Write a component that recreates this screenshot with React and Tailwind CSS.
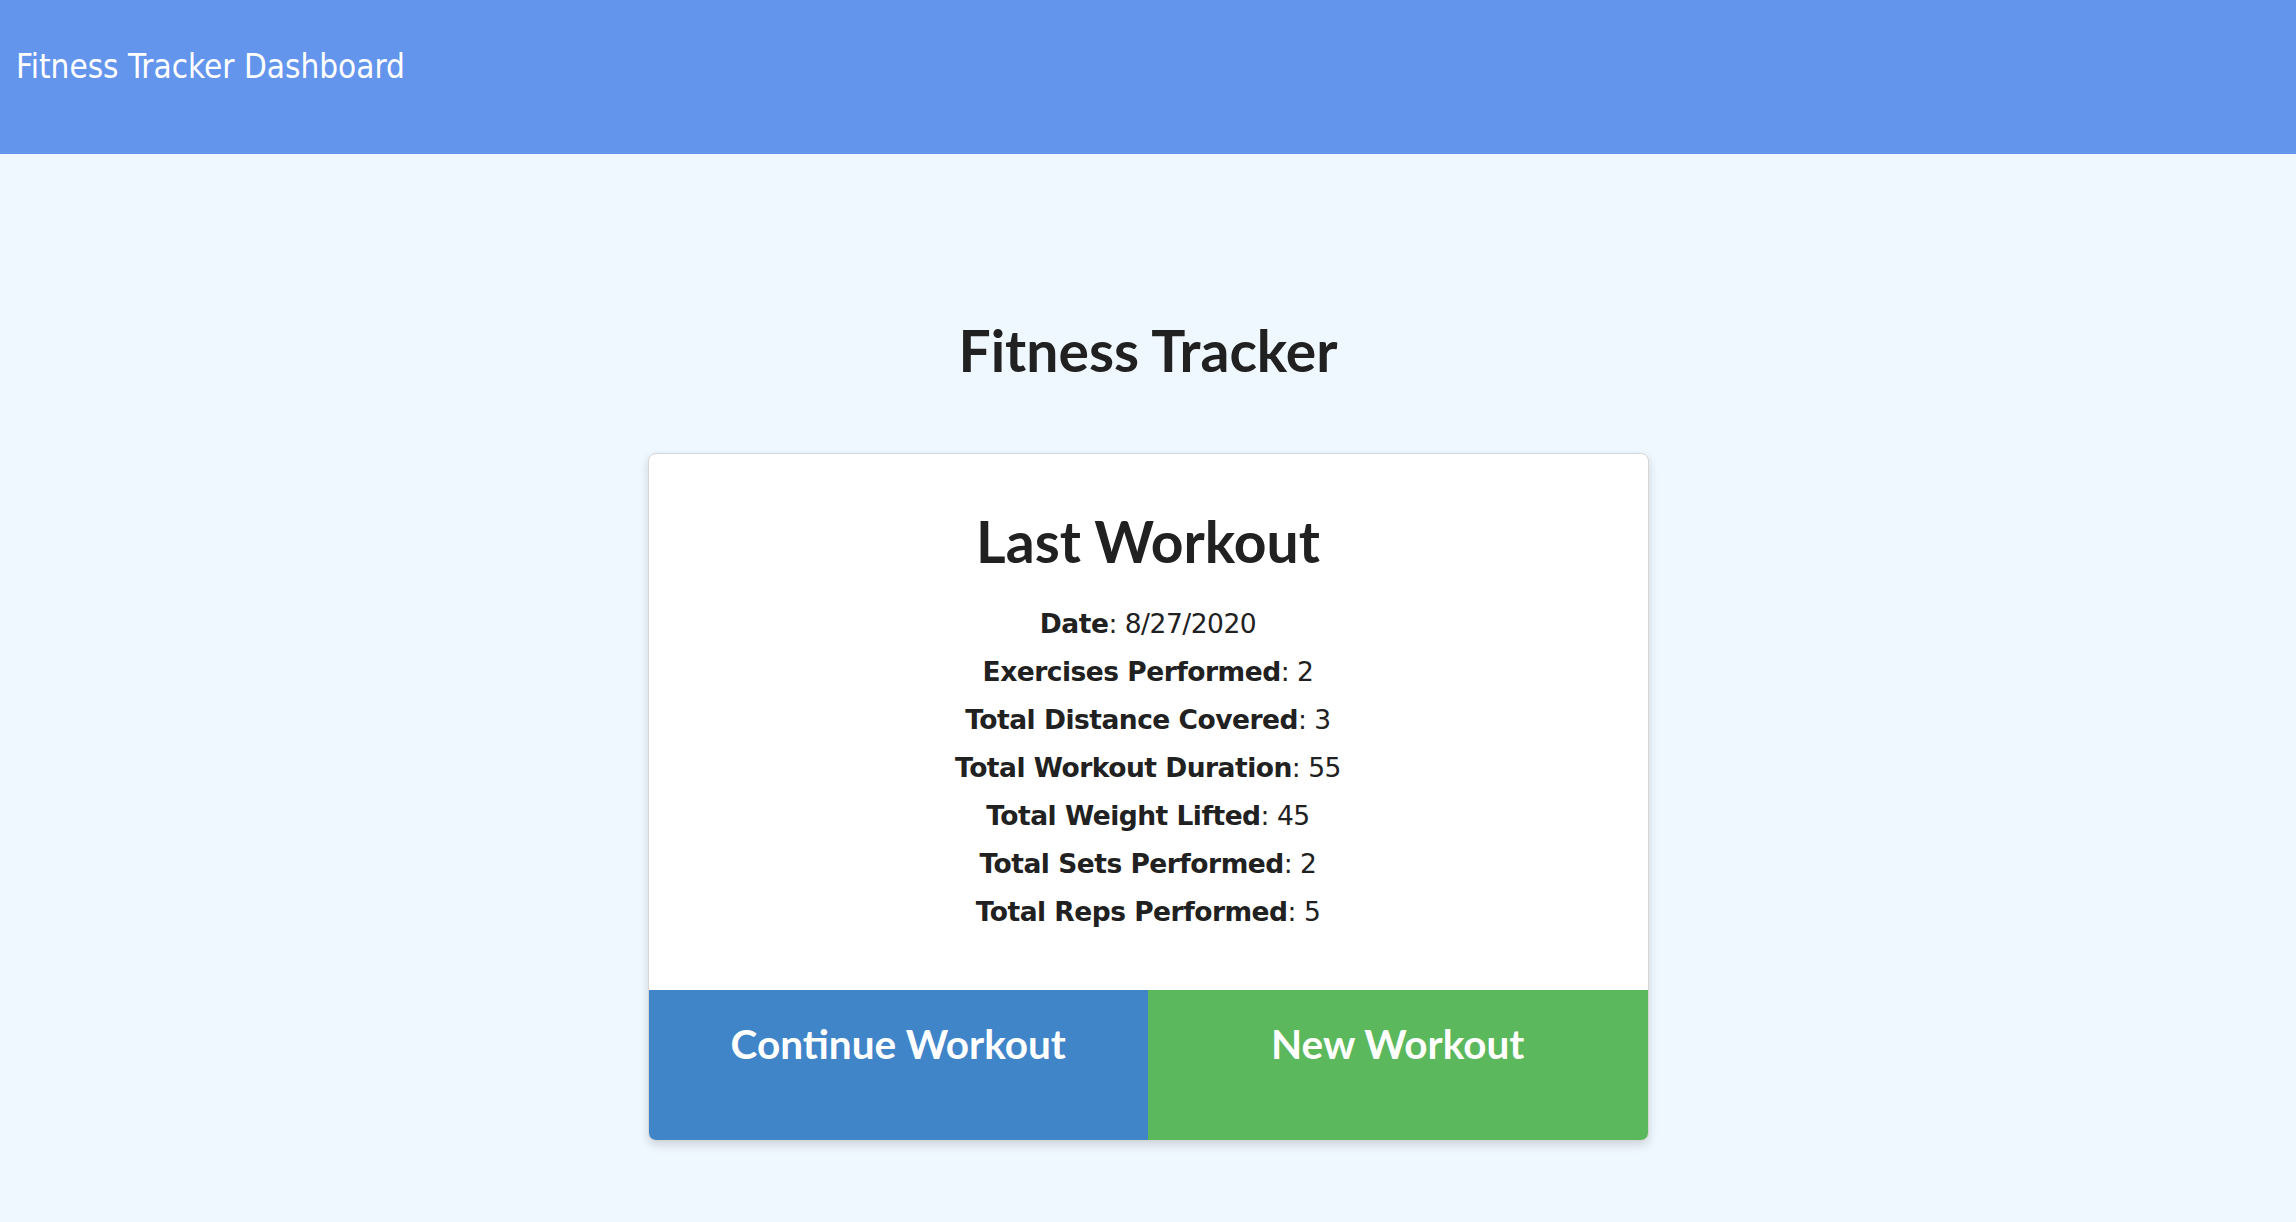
import React from "react";

const stats = [
  ["Date", "8/27/2020"],
  ["Exercises Performed", "2"],
  ["Total Distance Covered", "3"],
  ["Total Workout Duration", "55"],
  ["Total Weight Lifted", "45"],
  ["Total Sets Performed", "2"],
  ["Total Reps Performed", "5"],
];

export default function App() {
  return (
    <div className="min-h-[1222px] bg-[#f0f8ff] text-[#212121]">
      <header className="h-[154px] bg-[#6495ed] pl-4 pt-[48px]">
        <span className="font-['DejaVu_Sans_Condensed','DejaVu_Sans',Verdana,sans-serif] text-[33px] leading-[38px] text-white">
          Fitness Tracker Dashboard
        </span>
      </header>

      <main className="flex flex-col items-center pt-[162px]">
        <h1 className="font-['Lato',sans-serif] text-[57px] font-bold leading-[68px]">
          Fitness Tracker
        </h1>

        <div className="mt-[69px] flex w-[1001px] flex-col overflow-hidden rounded-lg border border-[#d6d6d6] bg-white shadow-[0_4px_10px_rgba(0,0,0,0.15)]">
          <div className="flex flex-col items-center pt-[54px] pb-[54px]">
            <h2 className="font-['Lato',sans-serif] text-[57px] font-bold leading-[67px]">
              Last Workout
            </h2>
            <div className="mt-[25px] flex flex-col items-center font-['DejaVu_Sans',Verdana,sans-serif] text-[26.5px] leading-[48px] tracking-[-0.5px]">
              {stats.map(([label, value]) => (
                <p key={label}>
                  <span className="font-bold">{label}</span>: {value}
                </p>
              ))}
            </div>
          </div>

          <div className="grid grid-cols-2 font-['Lato',sans-serif] text-[40.5px] font-bold text-white">
            <button className="flex h-[150px] justify-center bg-[#4185c9] pt-[30px] leading-[48px]">
              Continue Workout
            </button>
            <button className="flex h-[150px] justify-center bg-[#5cb85c] pt-[30px] leading-[48px]">
              New Workout
            </button>
          </div>
        </div>
      </main>
    </div>
  );
}
